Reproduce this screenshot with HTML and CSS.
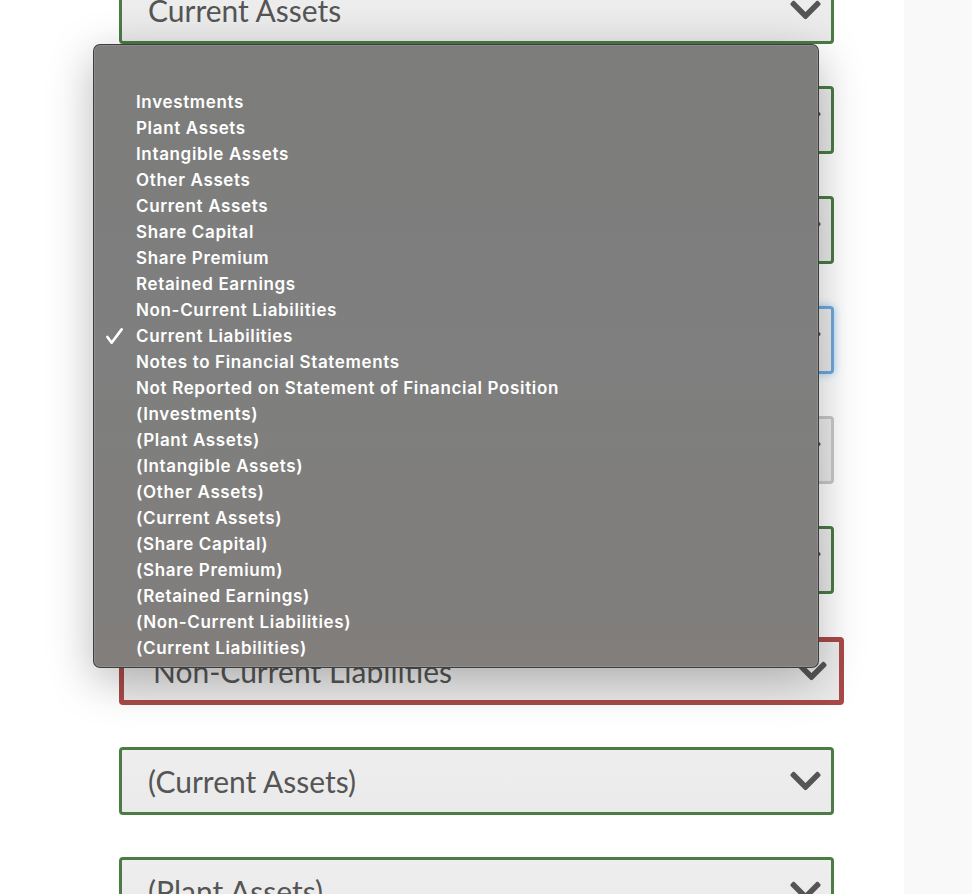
FILE: index.html
```html
<!DOCTYPE html>
<html>
<head>
<meta charset="utf-8">
<link rel="stylesheet" href="styles.css">
</head>
<body>
<div class="page">
  <main class="content">
    <div class="select ok">Current Assets<svg class="chev" viewBox="0 0 448 512"><path d="M207.029 381.476L12.686 187.132c-9.373-9.373-9.373-24.569 0-33.941l22.667-22.667c9.357-9.357 24.522-9.375 33.901-.04L224 284.505l154.745-154.021c9.379-9.335 24.544-9.317 33.901.04l22.667 22.667c9.373 9.373 9.373 24.569 0 33.941L240.971 381.476c-9.373 9.372-24.569 9.372-33.942 0z"/></svg></div>
    <div class="select ok">Investments<svg class="chev" viewBox="0 0 448 512"><path d="M207.029 381.476L12.686 187.132c-9.373-9.373-9.373-24.569 0-33.941l22.667-22.667c9.357-9.357 24.522-9.375 33.901-.04L224 284.505l154.745-154.021c9.379-9.335 24.544-9.317 33.901.04l22.667 22.667c9.373 9.373 9.373 24.569 0 33.941L240.971 381.476c-9.373 9.372-24.569 9.372-33.942 0z"/></svg></div>
    <div class="select ok">Plant Assets<svg class="chev" viewBox="0 0 448 512"><path d="M207.029 381.476L12.686 187.132c-9.373-9.373-9.373-24.569 0-33.941l22.667-22.667c9.357-9.357 24.522-9.375 33.901-.04L224 284.505l154.745-154.021c9.379-9.335 24.544-9.317 33.901.04l22.667 22.667c9.373 9.373 9.373 24.569 0 33.941L240.971 381.476c-9.373 9.372-24.569 9.372-33.942 0z"/></svg></div>
    <div class="select focus">Current Liabilities<svg class="chev" viewBox="0 0 448 512"><path d="M207.029 381.476L12.686 187.132c-9.373-9.373-9.373-24.569 0-33.941l22.667-22.667c9.357-9.357 24.522-9.375 33.901-.04L224 284.505l154.745-154.021c9.379-9.335 24.544-9.317 33.901.04l22.667 22.667c9.373 9.373 9.373 24.569 0 33.941L240.971 381.476c-9.373 9.372-24.569 9.372-33.942 0z"/></svg></div>
    <div class="select plain">Select<svg class="chev" viewBox="0 0 448 512"><path d="M207.029 381.476L12.686 187.132c-9.373-9.373-9.373-24.569 0-33.941l22.667-22.667c9.357-9.357 24.522-9.375 33.901-.04L224 284.505l154.745-154.021c9.379-9.335 24.544-9.317 33.901.04l22.667 22.667c9.373 9.373 9.373 24.569 0 33.941L240.971 381.476c-9.373 9.372-24.569 9.372-33.942 0z"/></svg></div>
    <div class="select ok">Share Capital<svg class="chev" viewBox="0 0 448 512"><path d="M207.029 381.476L12.686 187.132c-9.373-9.373-9.373-24.569 0-33.941l22.667-22.667c9.357-9.357 24.522-9.375 33.901-.04L224 284.505l154.745-154.021c9.379-9.335 24.544-9.317 33.901.04l22.667 22.667c9.373 9.373 9.373 24.569 0 33.941L240.971 381.476c-9.373 9.372-24.569 9.372-33.942 0z"/></svg></div>
    <div class="select bad">Non-Current Liabilities<svg class="chev" viewBox="0 0 448 512"><path d="M207.029 381.476L12.686 187.132c-9.373-9.373-9.373-24.569 0-33.941l22.667-22.667c9.357-9.357 24.522-9.375 33.901-.04L224 284.505l154.745-154.021c9.379-9.335 24.544-9.317 33.901.04l22.667 22.667c9.373 9.373 9.373 24.569 0 33.941L240.971 381.476c-9.373 9.372-24.569 9.372-33.942 0z"/></svg></div>
    <div class="select ok">(Current Assets)<svg class="chev" viewBox="0 0 448 512"><path d="M207.029 381.476L12.686 187.132c-9.373-9.373-9.373-24.569 0-33.941l22.667-22.667c9.357-9.357 24.522-9.375 33.901-.04L224 284.505l154.745-154.021c9.379-9.335 24.544-9.317 33.901.04l22.667 22.667c9.373 9.373 9.373 24.569 0 33.941L240.971 381.476c-9.373 9.372-24.569 9.372-33.942 0z"/></svg></div>
    <div class="select ok">(Plant Assets)<svg class="chev" viewBox="0 0 448 512"><path d="M207.029 381.476L12.686 187.132c-9.373-9.373-9.373-24.569 0-33.941l22.667-22.667c9.357-9.357 24.522-9.375 33.901-.04L224 284.505l154.745-154.021c9.379-9.335 24.544-9.317 33.901.04l22.667 22.667c9.373 9.373 9.373 24.569 0 33.941L240.971 381.476c-9.373 9.372-24.569 9.372-33.942 0z"/></svg></div>
  </main>
  <aside class="rail"></aside>

  <ul class="menu">
    <li>Investments</li>
    <li>Plant Assets</li>
    <li>Intangible Assets</li>
    <li>Other Assets</li>
    <li>Current Assets</li>
    <li>Share Capital</li>
    <li>Share Premium</li>
    <li>Retained Earnings</li>
    <li>Non-Current Liabilities</li>
    <li class="checked"><svg class="tick" viewBox="0 0 20 20"><polyline points="2.5,10.5 7,16.5 17.5,2.5"/></svg>Current Liabilities</li>
    <li>Notes to Financial Statements</li>
    <li>Not Reported on Statement of Financial Position</li>
    <li>(Investments)</li>
    <li>(Plant Assets)</li>
    <li>(Intangible Assets)</li>
    <li>(Other Assets)</li>
    <li>(Current Assets)</li>
    <li>(Share Capital)</li>
    <li>(Share Premium)</li>
    <li>(Retained Earnings)</li>
    <li>(Non-Current Liabilities)</li>
    <li>(Current Liabilities)</li>
  </ul>
</div>
</body>
</html>
```

FILE: styles.css
```css
html, body {
  margin: 0;
  padding: 0;
  height: 100%;
  overflow: hidden;
  background: #ffffff;
}

.page {
  position: relative;
  display: flex;
  height: 894px;
  width: 972px;
  overflow: hidden;
}

.content {
  width: 904px;
  flex: none;
  background: #ffffff;
  padding-left: 119px;
  box-sizing: border-box;
  display: flex;
  flex-direction: column;
  gap: 42.2px;
  margin-top: -24.5px;
}

.rail {
  flex: 1;
  background: #f9f9f9;
}

.select {
  box-sizing: border-box;
  width: 715px;
  height: 68px;
  flex: none;
  border: 3px solid #4a7c44;
  border-radius: 4px;
  background: linear-gradient(#eeeeee, #eaeaea);
  display: flex;
  align-items: center;
  justify-content: space-between;
  padding: 0 10px 0 26px;
  font-family: Lato, "Open Sans", sans-serif;
  font-size: 30px;
  color: #555555;
}

.select.focus {
  border-color: #6fa9dd;
  box-shadow: 0 0 8px rgba(102, 175, 233, 0.6);
}

.select.plain {
  border-color: #c9c9c9;
}

.select.bad {
  border: 5px solid #a84a47;
  width: 725px;
  padding-left: 29px;
  padding-right: 12px;
}

.chev {
  width: 31px;
  height: 36px;
  fill: #555555;
  flex: none;
}

.menu {
  position: absolute;
  left: 93px;
  top: 44px;
  width: 726px;
  height: 624px;
  box-sizing: border-box;
  margin: 0;
  padding: 44px 0 0 42px;
  list-style: none;
  border: 1px solid rgba(40, 40, 40, 0.75);
  border-radius: 7px;
  background: linear-gradient(180deg, #7c7d7b 0%, #7e7f7e 50%, #817e7c 100%);
  box-shadow: inset 0 0 0 1px rgba(255, 255, 255, 0.12), 0 12px 45px rgba(0, 0, 0, 0.28);
  font-family: Inter, "Noto Sans", sans-serif;
  font-weight: 600;
  font-size: 17px;
  letter-spacing: 0.65px;
  color: #ffffff;
}

.menu li {
  height: 26px;
  line-height: 26px;
  position: relative;
  white-space: nowrap;
}

.tick {
  position: absolute;
  left: -31px;
  top: 4px;
  width: 19px;
  height: 19px;
  fill: none;
  stroke: #ffffff;
  stroke-width: 2.8;
  stroke-linecap: round;
  stroke-linejoin: round;
}
```
